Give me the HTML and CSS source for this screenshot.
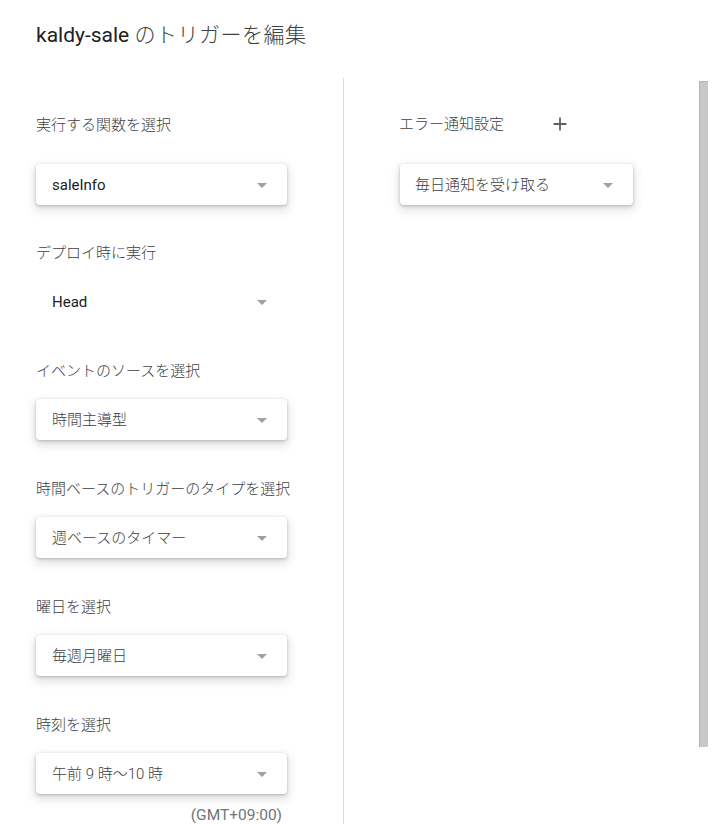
FILE: index.html
```html
<!DOCTYPE html>
<html lang="ja">
<head>
<meta charset="utf-8">
<title>kaldy-sale のトリガーを編集</title>
<link rel="stylesheet" href="styles.css">
</head>
<body>
<div class="page">
  <h1 class="title">kaldy-sale <span class="jp">のトリガーを編集</span></h1>
  <div class="main">
    <div class="col-left">
      <div class="field first">
        <div class="label">実行する関数を選択</div>
        <div class="select"><span class="value latin">saleInfo</span><i class="arrow"></i></div>
      </div>
      <div class="field">
        <div class="label">デプロイ時に実行</div>
        <div class="select flat"><span class="value latin">Head</span><i class="arrow"></i></div>
      </div>
      <div class="field">
        <div class="label">イベントのソースを選択</div>
        <div class="select"><span class="value">時間主導型</span><i class="arrow"></i></div>
      </div>
      <div class="field">
        <div class="label">時間ベースのトリガーのタイプを選択</div>
        <div class="select"><span class="value">週ベースのタイマー</span><i class="arrow"></i></div>
      </div>
      <div class="field">
        <div class="label">曜日を選択</div>
        <div class="select"><span class="value">毎週月曜日</span><i class="arrow"></i></div>
      </div>
      <div class="field">
        <div class="label">時刻を選択</div>
        <div class="select"><span class="value">午前 9 時〜10 時</span><i class="arrow"></i></div>
        <div class="tz">(GMT+09:00)</div>
      </div>
    </div>
    <div class="divider"></div>
    <div class="col-right">
      <div class="label-row">
        <span class="label">エラー通知設定</span>
        <svg class="plus" width="14" height="14" viewBox="0 0 14 14" aria-hidden="true"><path d="M7 0.5v13M0.5 7h13" stroke="#5f6368" stroke-width="1.8" fill="none"/></svg>
      </div>
      <div class="select narrow"><span class="value">毎日通知を受け取る</span><i class="arrow"></i></div>
    </div>
    <div class="scrollbar"></div>
  </div>
</div>
</body>
</html>
```
FILE: styles.css
```css
html, body {
  margin: 0;
  padding: 0;
  background: #ffffff;
}
body {
  font-family: Roboto, "Noto Sans CJK JP", sans-serif;
  color: #202124;
}
.page {
  width: 721px;
  height: 824px;
  overflow: hidden;
}
.title {
  margin: 21px 0 29px 36px;
  font-size: 21px;
  line-height: 28px;
  font-weight: 400;
  color: #202124;
}
.title .jp {
  font-weight: 300;
  color: #3c4043;
  letter-spacing: 0.5px;
}
.main {
  position: relative;
  display: flex;
  height: 746px;
}
.col-left {
  width: 307px;
  padding: 37px 0 0 36px;
}
.divider {
  width: 1px;
  background: #dadce0;
}
.col-right {
  flex: 1;
  padding: 36px 0 0 55px;
}
.field {
  margin-bottom: 39px;
}
.field.first {
  margin-bottom: 38px;
}
.label {
  font-size: 15px;
  line-height: 20px;
  font-weight: 300;
  color: #3c4043;
  margin-bottom: 18px;
}
.field.first .label {
  margin-bottom: 29px;
}
.select {
  width: 251px;
  height: 41px;
  box-sizing: border-box;
  display: flex;
  align-items: center;
  justify-content: space-between;
  padding: 0 20px 0 16px;
  background: #fff;
  border-radius: 4px;
  box-shadow: 0 1px 3px 0 rgba(60, 64, 67, 0.3), 0 4px 8px 2px rgba(60, 64, 67, 0.15);
}
.select.flat {
  box-shadow: none;
}
.select.narrow {
  width: 233px;
  margin-left: 1px;
  padding-left: 15px;
}
.value {
  font-size: 15px;
  line-height: 20px;
  font-weight: 300;
  color: #3c4043;
}
.value.latin {
  font-weight: 400;
  color: #202124;
}
.arrow {
  width: 0;
  height: 0;
  border-left: 5px solid transparent;
  border-right: 5px solid transparent;
  border-top: 5px solid #a0a0a0;
  margin-top: 1px;
}
.tz {
  width: 246px;
  text-align: right;
  font-size: 15.5px;
  line-height: 20px;
  color: #70757a;
  margin-top: 11px;
}
.label-row {
  display: flex;
  align-items: center;
  height: 20px;
  margin-bottom: 30px;
}
.label-row .label {
  margin-bottom: 0;
}
.plus {
  margin-left: 49px;
}
.scrollbar {
  position: absolute;
  left: 699px;
  top: 3px;
  width: 9px;
  height: 666px;
  background: #c8c8c8;
  box-shadow: inset 1px 1px 0 #b5b5b5;
}
```
